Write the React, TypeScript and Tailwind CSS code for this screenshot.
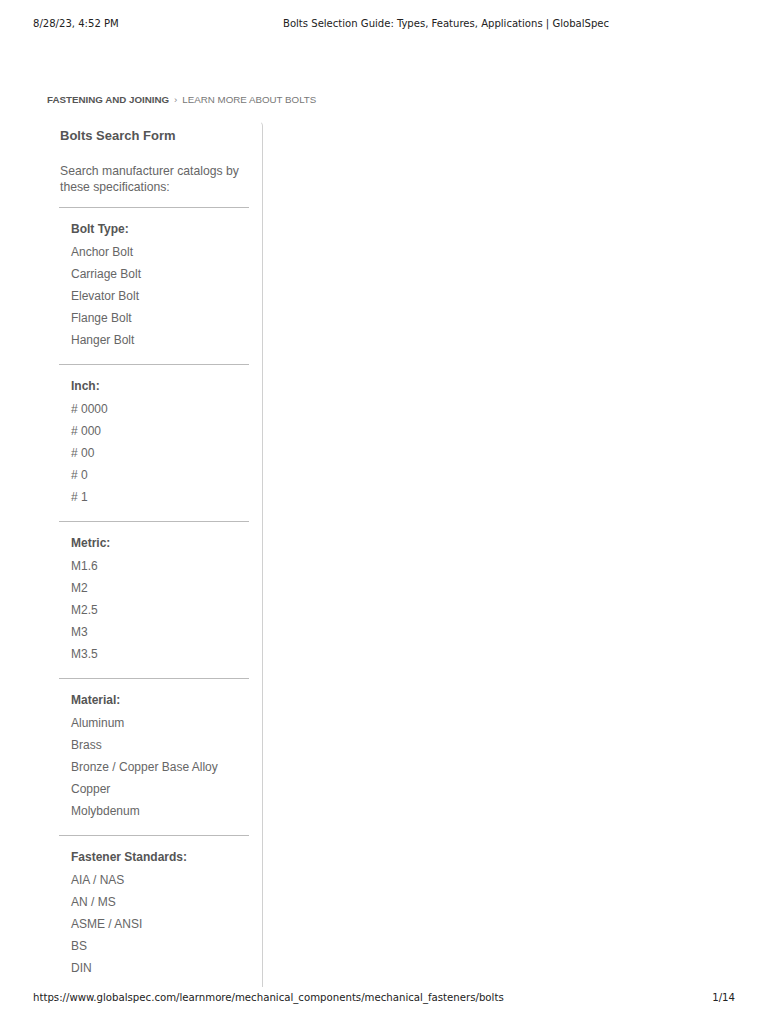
import React from 'react';

interface Section {
  heading: string;
  items: string[];
}

const sections: Section[] = [
  { heading: 'Bolt Type:', items: ['Anchor Bolt', 'Carriage Bolt', 'Elevator Bolt', 'Flange Bolt', 'Hanger Bolt'] },
  { heading: 'Inch:', items: ['# 0000', '# 000', '# 00', '# 0', '# 1'] },
  { heading: 'Metric:', items: ['M1.6', 'M2', 'M2.5', 'M3', 'M3.5'] },
  { heading: 'Material:', items: ['Aluminum', 'Brass', 'Bronze / Copper Base Alloy', 'Copper', 'Molybdenum'] },
  { heading: 'Fastener Standards:', items: ['AIA / NAS', 'AN / MS', 'ASME / ANSI', 'BS', 'DIN'] },
];

const App: React.FC = () => {
  return (
    <div className="w-[768px] h-[1024px] bg-white relative overflow-hidden font-['Liberation_Sans',Arial,sans-serif]">
      {/* Print header */}
      <div className="flex h-[48px] items-center px-[33px] text-[11.2px] text-[#222] font-['DejaVu_Sans_Condensed','DejaVu_Sans',sans-serif] [font-stretch:condensed]">
        <span className="w-[250px]">8/28/23, 4:52 PM</span>
        <span>Bolts Selection Guide: Types, Features, Applications | GlobalSpec</span>
      </div>

      {/* Breadcrumb */}
      <div className="mt-[46px] ml-[47px] flex items-center text-[9.75px] leading-[12px] uppercase">
        <span className="font-bold text-[#555]">Fastening and Joining</span>
        <span className="mx-[5px] text-[#888]">›</span>
        <span className="text-[#777]">Learn more about Bolts</span>
      </div>

      {/* Sidebar */}
      <div className="ml-[47px] mt-[15px] w-[216px] h-[866px] border-r border-t border-[#d0d0d0] border-t-transparent rounded-tr-[5px]">
        <div className="pl-[13px] pt-[6px] text-[13px] leading-[16px] font-bold text-[#555]">Bolts Search Form</div>
        <p className="pl-[13px] pr-[12px] mt-[19px] text-[12.2px] leading-[16px] text-[#666]">
          Search manufacturer catalogs by these specifications:
        </p>
        <div className="mt-[12px]">
          {sections.map((s) => (
            <div key={s.heading} className="ml-[12px] mr-[13px] border-t border-[#bbb] pt-[10px] pb-[13px]">
              <div className="pl-[12px] text-[12px] leading-[23px] font-bold text-[#555]">{s.heading}</div>
              {s.items.map((it) => (
                <div key={it} className="pl-[12px] text-[12px] leading-[22px] text-[#666]">
                  {it}
                </div>
              ))}
            </div>
          ))}
        </div>
      </div>

      {/* Print footer */}
      <div className="absolute left-0 right-0 top-[990px] flex justify-between px-[33px] text-[11.3px] text-[#222] font-['DejaVu_Sans_Condensed','DejaVu_Sans',sans-serif] [font-stretch:condensed]">
        <span>https://www.globalspec.com/learnmore/mechanical_components/mechanical_fasteners/bolts</span>
        <span>1/14</span>
      </div>
    </div>
  );
};

export default App;
